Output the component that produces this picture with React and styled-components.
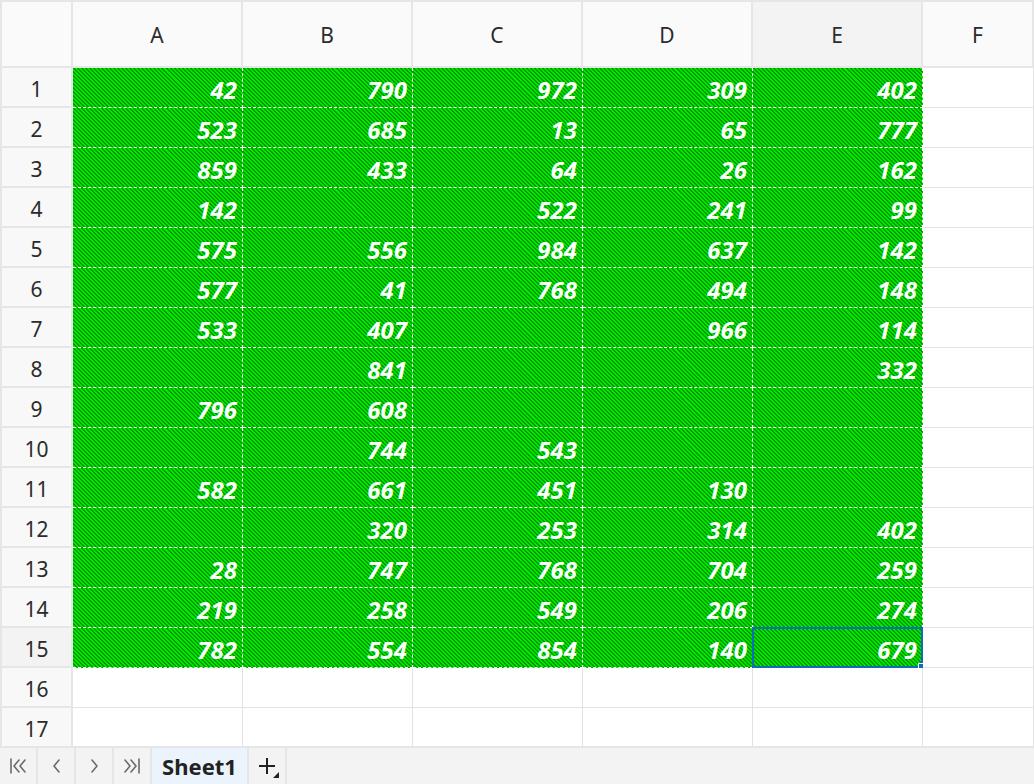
import React from 'react'
import styled, {createGlobalStyle} from 'styled-components'

const GlobalStyle = createGlobalStyle`
  html, body { margin: 0; padding: 0; background: #fff; overflow: hidden; }
  body { font-family: "Noto Sans", "Open Sans", sans-serif; }
`;

const data = [
    [42, 790, 972, 309, 402],
    [523, 685, 13, 65, 777],
    [859, 433, 64, 26, 162],
    [142, null, 522, 241, 99],
    [575, 556, 984, 637, 142],
    [577, 41, 768, 494, 148],
    [533, 407, null, 966, 114],
    [null, 841, null, null, 332],
    [796, 608, null, null, null],
    [null, 744, 543, null, null],
    [582, 661, 451, 130, null],
    [null, 320, 253, 314, 402],
    [28, 747, 768, 704, 259],
    [219, 258, 549, 206, 274],
    [782, 554, 854, 140, 679],
];

const columns = ['A', 'B', 'C', 'D', 'E', 'F'];
const selected = {row: 14, col: 4};

const Page = styled.div`
  width: 1034px;
  height: 784px;
  display: flex;
  flex-direction: column;
  overflow: hidden;
`;

const Sheet = styled.div`
  flex: 1;
  overflow: hidden;
  display: grid;
  grid-template-columns: 73px repeat(5, 170px) 1fr;
  grid-auto-rows: 40px;
  grid-template-rows: 68px;
  align-content: start;
`;

const Corner = styled.div`
  background: #fafafa;
  border: 2px solid #e6e6e6;
  border-right-width: 2px;
`;

const ColHeader = styled.div`
  display: flex;
  align-items: center;
  justify-content: center;
  background: ${p => p.active ? '#f3f3f3' : '#fafafa'};
  border-top: 2px solid #e6e6e6;
  border-bottom: 2px solid #e6e6e6;
  border-right: 2px solid #e6e6e6;
  font-size: 21px;
  color: #2b2b2b;
  padding-top: 2px;
`;

const RowHeader = styled.div`
  display: flex;
  align-items: center;
  justify-content: center;
  background: ${p => p.active ? '#f3f3f3' : '#f8f8f8'};
  border-left: 2px solid #e6e6e6;
  border-right: 2px solid #e6e6e6;
  border-bottom: 2px solid #e6e6e6;
  font-size: 21px;
  color: #2b2b2b;
  padding-top: 3px;
`;

const Cell = styled.div`
  position: relative;
  display: flex;
  align-items: center;
  justify-content: flex-end;
  padding: 3px 5px 0 0;
  box-sizing: border-box;
  font-size: 24px;
  font-weight: 700;
  font-style: italic;
  color: #fff;
  background: ${p => p.filled
          ? 'repeating-linear-gradient(45deg, #00e800 0px, #00e800 1.45px, #009c00 1.45px, #009c00 2.85px)'
          : '#fff'};
  border-right: 1px ${p => p.filled ? 'dashed #fff' : 'solid #e2e2e2'};
  border-bottom: 1px ${p => p.filled ? 'dashed #fff' : 'solid #e2e2e2'};
`;

const Selection = styled.div`
  position: absolute;
  inset: -1px -1px -1px -1px;
  border: 2px solid #0f6cbd;
  pointer-events: none;
`;

const Handle = styled.span`
  position: absolute;
  right: -5px;
  bottom: -5px;
  width: 6px;
  height: 6px;
  background: #0f6cbd;
  border: 1px solid #fff;
`;

const TabBar = styled.div`
  height: 38px;
  flex-shrink: 0;
  display: flex;
  background: #f3f3f3;
  border-top: 2px solid #e6e6e6;
  box-sizing: border-box;
`;

const NavButton = styled.button`
  width: 38px;
  height: 100%;
  padding: 0;
  border: none;
  border-right: 2px solid #e6e6e6;
  background: #f3f3f3;
  display: flex;
  align-items: center;
  justify-content: center;
  color: #6b6b6b;
`;

const SheetTab = styled.div`
  width: 95px;
  display: flex;
  align-items: center;
  justify-content: center;
  background: #ebf4fd;
  border-right: 2px solid #e6e6e6;
  font-size: 22px;
  font-weight: 700;
  color: #222;
`;

const AddButton = styled(NavButton)`
  position: relative;
  color: #222;
`;

const Corner3 = styled.span`
  position: absolute;
  right: 6px;
  bottom: 6px;
  width: 0;
  height: 0;
  border-left: 6px solid transparent;
  border-bottom: 6px solid #222;
`;

const Icon = ({d}) => (
    <svg width="22" height="22" viewBox="0 0 22 22" fill="none" stroke="currentColor" strokeWidth="1.6"
         strokeLinecap="round" strokeLinejoin="round">
        <path d={d}/>
    </svg>
);

export default function App() {
    return (
        <Page>
            <GlobalStyle/>
            <Sheet>
                <Corner/>
                {columns.map((c, i) => (
                    <ColHeader key={c} active={i === selected.col}>{c}</ColHeader>
                ))}
                {Array.from({length: 17}).map((_, r) => (
                    <React.Fragment key={r}>
                        <RowHeader active={r === selected.row}>{r + 1}</RowHeader>
                        {columns.map((c, ci) => {
                            const filled = r < data.length && ci < 5;
                            const value = filled ? data[r][ci] : null;
                            const isSel = r === selected.row && ci === selected.col;
                            return (
                                <Cell key={c} filled={filled}>
                                    {value}
                                    {isSel && <Selection><Handle/></Selection>}
                                </Cell>
                            );
                        })}
                    </React.Fragment>
                ))}
            </Sheet>
            <TabBar>
                <NavButton><Icon d="M4 4v14M12 5l-5 6 5 6M18 5l-5 6 5 6"/></NavButton>
                <NavButton><Icon d="M14 5l-5 6 5 6"/></NavButton>
                <NavButton><Icon d="M9 5l5 6-5 6"/></NavButton>
                <NavButton><Icon d="M4 5l5 6-5 6M10 5l5 6-5 6M18 4v14"/></NavButton>
                <SheetTab>Sheet1</SheetTab>
                <AddButton>
                    <svg width="22" height="22" viewBox="0 0 22 22" stroke="currentColor" strokeWidth="2">
                        <path d="M11 3v16M3 11h16"/>
                    </svg>
                    <Corner3/>
                </AddButton>
            </TabBar>
        </Page>
    );
}
